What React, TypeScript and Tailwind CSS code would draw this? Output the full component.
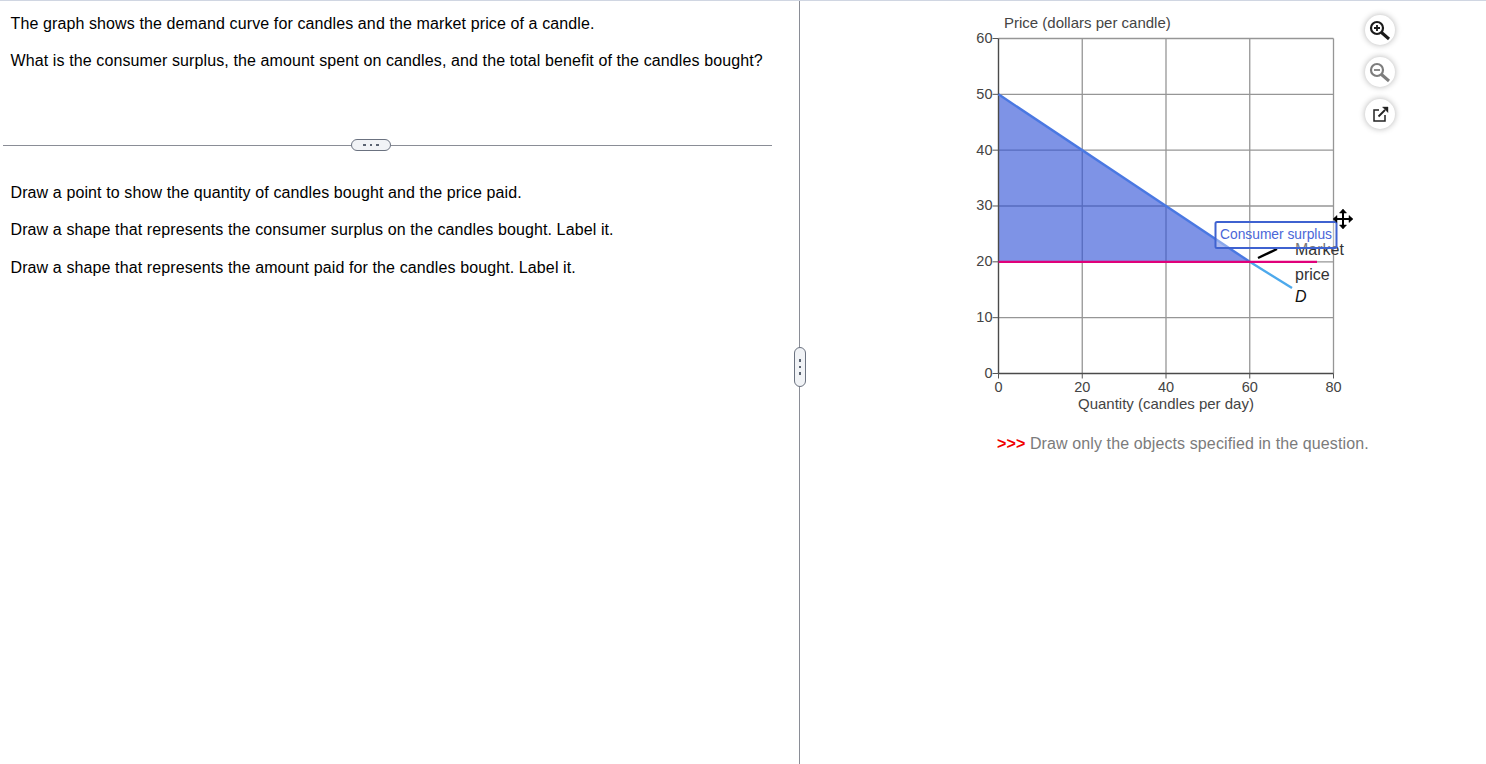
const font = { fontFamily: '"Liberation Sans", Arial, sans-serif' };

function Chart() {
  const X = (q: number) => 38.5 + q * 4.1875;
  const Y = (p: number) => 37.5 + (60 - p) * 5.5833;
  const yt = [60, 50, 40, 30, 20, 10, 0];
  const xt = [0, 20, 40, 60, 80];
  return (
    <svg width="420" height="420" viewBox="0 0 420 420" className="block">
      <g fontFamily='"Liberation Sans", Arial, sans-serif' fontSize="14.5" fill="#444">
        {yt.slice(1, 6).concat(60).map((p) => (
          <line key={p} x1={X(0)} x2={X(80)} y1={Y(p)} y2={Y(p)} stroke="#969696" strokeWidth="1.3" />
        ))}
        {xt.slice(1).map((q) => (
          <line key={q} x1={X(q)} x2={X(q)} y1={Y(60)} y2={Y(0)} stroke="#969696" strokeWidth="1.3" />
        ))}
        <polygon points={`${X(0)},${Y(50)} ${X(60)},${Y(20)} ${X(0)},${Y(20)}`} fill="#2f50d6" fillOpacity="0.62" />
        <line x1={X(0)} x2={X(0)} y1={Y(60)} y2={Y(0)} stroke="#4a4a4a" strokeWidth="1.4" />
        <line x1={X(0)} x2={X(80)} y1={Y(0)} y2={Y(0)} stroke="#4a4a4a" strokeWidth="1.4" />
        {yt.map((p) => (
          <g key={p}>
            <line x1={X(0) - 6} x2={X(0)} y1={Y(p)} y2={Y(p)} stroke="#555" />
            <text x={X(0) - 6} y={Y(p) + 4.5} textAnchor="end">{p}</text>
          </g>
        ))}
        {xt.map((q) => (
          <g key={q}>
            <line x1={X(q)} x2={X(q)} y1={Y(0)} y2={Y(0) + 5} stroke="#555" />
            <text x={X(q)} y={391} textAnchor="middle">{q}</text>
          </g>
        ))}
        <text x="44" y="27" fontSize="15">Price (dollars per candle)</text>
        <text x="118" y="408" fontSize="15">Quantity (candles per day)</text>
        <line x1={X(60)} y1={Y(20)} x2="332" y2="287" stroke="#4da9ec" strokeWidth="2.4" />
        <line x1={X(0)} y1={Y(50)} x2={X(60)} y2={Y(20)} stroke="#4a78e2" strokeWidth="2.4" />
        <line x1={X(0)} x2="357" y1={Y(20)} y2={Y(20)} stroke="#e0007a" strokeWidth="2.4" />
        <line x1="298" y1="257" x2="317" y2="248" stroke="#000" strokeWidth="2.4" />
        <text x="335" y="254" fontSize="16" fill="#333">Market</text>
        <text x="335" y="279" fontSize="16" fill="#333">price</text>
        <text x="335" y="301" fontSize="16" fill="#111" fontStyle="italic">D</text>
        <rect x="255.5" y="221" width="121" height="26" rx="1.5" fill="#fff" fillOpacity="0.35" stroke="#3f62d0" strokeWidth="2" />
        <text x="260" y="238" fontSize="13.8" fill="#4a66d8">Consumer surplus</text>
        <g transform="translate(383 218)" fill="#000" stroke="#000">
          <path d="M-7 0H7M0 -7V7" strokeWidth="2" />
          <path d="M0 -10l-3.5 4h7zM0 10l-3.5 -4h7zM-10 0l4 -3.5v7zM10 0l-4 -3.5v7z" strokeWidth="0.5" />
        </g>
      </g>
    </svg>
  );
}

function ZoomIcon({ plus, color }: { plus: boolean; color: string }) {
  return (
    <svg width="22" height="22" viewBox="0 0 22 22" fill="none" stroke={color}>
      <circle cx="8" cy="9" r="6" strokeWidth="2.2" />
      <path d="M12.5 13.5l7.5 6.5" strokeWidth="3" />
      <path d={plus ? "M5 9h6M8 6v6" : "M5 9h6"} strokeWidth="1.8" />
    </svg>
  );
}

export default function App() {
  return (
    <div className="relative flex h-[764px] w-[1486px] overflow-hidden border-t border-[#d0d6e2] bg-white text-[16px] text-black" style={font}>
      <div className="flex w-[800px] shrink-0 flex-col border-r border-[#8a8d96]">
        <div className="flex flex-col gap-[18px] px-[10.5px] pt-[14px] leading-[18.5px] tracking-[0.11px]">
          <p>The graph shows the demand curve for candles and the market price of a candle.</p>
          <p>What is the consumer surplus, the amount spent on candles, and the total benefit of the candles bought?</p>
        </div>
        <div className="mt-[69px] ml-[3px] flex w-[769px] items-center">
          <div className="h-px flex-1 bg-[#8a8d96]" />
          <div className="flex h-[12px] w-[40px] items-center justify-center gap-[4px] rounded-full border border-[#6b7280] bg-[#f1f3f6]">
            <span className="size-[2.5px] bg-[#5b6472]" />
            <span className="size-[2.5px] bg-[#5b6472]" />
            <span className="size-[2.5px] bg-[#5b6472]" />
          </div>
          <div className="h-px w-[381px] bg-[#8a8d96]" />
        </div>
        <div className="mt-[32.5px] flex flex-col gap-[19px] px-[10.5px] leading-[18.5px] tracking-[0.11px]">
          <p>Draw a point to show the quantity of candles bought and the price paid.</p>
          <p>Draw a shape that represents the consumer surplus on the candles bought. Label it.</p>
          <p>Draw a shape that represents the amount paid for the candles bought. Label it.</p>
        </div>
      </div>

      <div className="absolute left-[794px] top-[346px] flex h-[40px] w-[12px] flex-col items-center justify-center gap-[4px] rounded-full border border-[#6b7280] bg-[#f1f3f6]">
        <span className="size-[2.5px] bg-[#5b6472]" />
        <span className="size-[2.5px] bg-[#5b6472]" />
        <span className="size-[2.5px] bg-[#5b6472]" />
      </div>

      <div className="ml-[160px] flex flex-col">
        <Chart />
        <p className="mt-[14px] ml-[37px] leading-[18px] tracking-[0.11px] text-[#7b7b7b]">
          <span className="font-bold text-[#f00000]">&gt;&gt;&gt;</span> Draw only the objects specified in the question.
        </p>
      </div>

      <div className="absolute left-[1365px] top-[14px] flex flex-col gap-[12px]">
        <div className="flex size-[30px] items-center justify-center rounded-full bg-white shadow-[0_0_6px_rgba(0,0,0,0.3)]">
          <ZoomIcon plus color="#1a1a1a" />
        </div>
        <div className="flex size-[30px] items-center justify-center rounded-full bg-white shadow-[0_0_6px_rgba(0,0,0,0.3)]">
          <ZoomIcon plus={false} color="#7d7d7d" />
        </div>
        <div className="flex size-[30px] items-center justify-center rounded-full bg-white shadow-[0_0_6px_rgba(0,0,0,0.3)]">
          <svg width="18" height="18" viewBox="0 0 18 18" fill="none" stroke="#222">
            <path d="M8 5H3V16H14V10" strokeWidth="1.5" />
            <path d="M7.5 11.5L14 5" strokeWidth="1.8" />
            <path d="M11.5 2H17V7.5z" fill="#222" strokeWidth="0.4" />
          </svg>
        </div>
      </div>
    </div>
  );
}
